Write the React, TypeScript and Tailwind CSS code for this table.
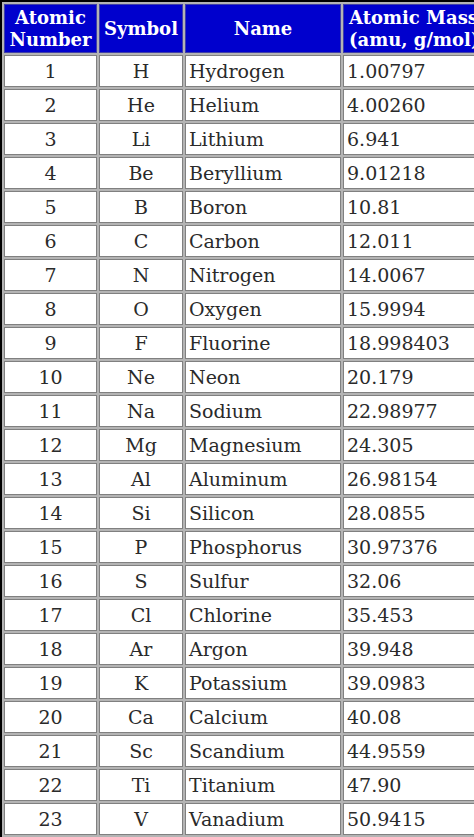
const elements: [number, string, string, string][] = [
  [1, "H", "Hydrogen", "1.00797"],
  [2, "He", "Helium", "4.00260"],
  [3, "Li", "Lithium", "6.941"],
  [4, "Be", "Beryllium", "9.01218"],
  [5, "B", "Boron", "10.81"],
  [6, "C", "Carbon", "12.011"],
  [7, "N", "Nitrogen", "14.0067"],
  [8, "O", "Oxygen", "15.9994"],
  [9, "F", "Fluorine", "18.998403"],
  [10, "Ne", "Neon", "20.179"],
  [11, "Na", "Sodium", "22.98977"],
  [12, "Mg", "Magnesium", "24.305"],
  [13, "Al", "Aluminum", "26.98154"],
  [14, "Si", "Silicon", "28.0855"],
  [15, "P", "Phosphorus", "30.97376"],
  [16, "S", "Sulfur", "32.06"],
  [17, "Cl", "Chlorine", "35.453"],
  [18, "Ar", "Argon", "39.948"],
  [19, "K", "Potassium", "39.0983"],
  [20, "Ca", "Calcium", "40.08"],
  [21, "Sc", "Scandium", "44.9559"],
  [22, "Ti", "Titanium", "47.90"],
  [23, "V", "Vanadium", "50.9415"],
];

export default function App() {
  return (
    <div className="h-[837px] w-[474px] overflow-hidden bg-white font-['DejaVu_Serif',serif]">
      <div className="w-[530px] border-t-2 border-l-2 border-black">
        <table className="w-full table-fixed border-separate border-spacing-[2px] bg-[#b4b4b4]">
          <colgroup>
            <col className="w-[93px]" />
            <col className="w-[84px]" />
            <col className="w-[156px]" />
            <col />
          </colgroup>
          <thead>
            <tr className="h-[49px] text-[18px] font-bold leading-[22px] text-white">
              <th className="border border-[#4040a8] bg-[#0000cd] text-center">
                Atomic
                <br />
                Number
              </th>
              <th className="border border-[#4040a8] bg-[#0000cd] text-center">Symbol</th>
              <th className="border border-[#4040a8] bg-[#0000cd] text-center">Name</th>
              <th className="whitespace-nowrap border border-[#4040a8] bg-[#0000cd] pl-[5px] text-left">
                Atomic Mass
                <br />
                (amu, g/mol)
              </th>
            </tr>
          </thead>
          <tbody className="text-[19px] text-[#2a2a2a]">
            {elements.map(([n, sym, name, mass]) => (
              <tr key={n} className="h-[32px]">
                <td className="border border-[#808080] bg-white text-center">{n}</td>
                <td className="border border-[#808080] bg-white text-center">{sym}</td>
                <td className="border border-[#808080] bg-white pl-[3px]">{name}</td>
                <td className="border border-[#808080] bg-white pl-[3px]">{mass}</td>
              </tr>
            ))}
          </tbody>
        </table>
      </div>
    </div>
  );
}
